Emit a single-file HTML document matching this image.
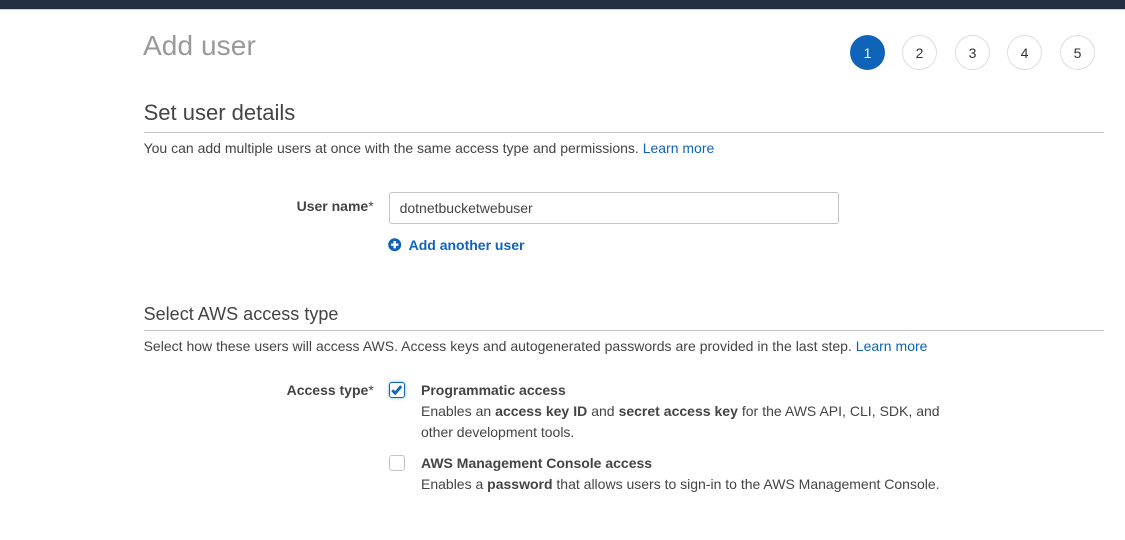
<!DOCTYPE html>
<html>
<head>
<meta charset="utf-8">
<style>
html,body{margin:0;padding:0;background:#fff;width:1125px;height:540px;overflow:hidden;font-family:"Liberation Sans",sans-serif;color:#444}
.a{position:absolute;white-space:nowrap;line-height:18px}
.t{font-size:14px}
b{color:#444}
.lnk{color:#0f63b8}
.c{position:absolute;top:35px;width:33px;height:33px;border:1px solid #ddd;border-radius:50%;text-align:center;line-height:35px;font-size:14px;color:#333;background:#fff}
.line{position:absolute;left:144px;width:960px;height:1px;background:#c4c4c4}
</style>
</head>
<body>
<div style="position:absolute;left:0;top:0;width:1125px;height:9px;background:#232f42"></div>
<div style="position:absolute;left:0;top:9px;width:1125px;height:1px;background:#d0d3d6"></div>

<div class="a" style="left:143px;top:29px;font-size:28px;letter-spacing:.1px;line-height:34px;color:#999">Add user</div>

<div class="c" style="left:850px;width:35px;height:35px;border:0;background:#0f63b8;color:#fff;line-height:37px">1</div>
<div class="c" style="left:902px">2</div>
<div class="c" style="left:955px">3</div>
<div class="c" style="left:1007px">4</div>
<div class="c" style="left:1060px">5</div>

<div class="a" style="left:143.6px;top:100px;font-size:22px;line-height:26px;color:#444">Set user details</div>
<div class="line" style="top:132px"></div>
<div class="a t" style="left:143.6px;top:139px">You can add multiple users at once with the same access type and permissions. <span class="lnk">Learn more</span></div>

<div class="a t" style="left:296.6px;top:197px"><b>User name</b>*</div>
<div style="position:absolute;left:389px;top:192px;width:448px;height:30px;border:1px solid #c4c4c4;border-radius:3px;background:#fff"></div>
<div class="a t" style="left:399.6px;top:199px;color:#444">dotnetbucketwebuser</div>

<svg style="position:absolute;left:388px;top:238px" width="14" height="14" viewBox="0 0 14 14"><circle cx="6.7" cy="6.7" r="6.5" fill="#0f63b8"/><path d="M6.7 3v7.4M3 6.7h7.4" stroke="#fff" stroke-width="2.4"/></svg>
<div class="a t" style="left:408.6px;top:236px;font-weight:bold;color:#0f63b8">Add another user</div>

<div class="a" style="left:143.6px;top:303px;font-size:18px;letter-spacing:.02px;line-height:22px;color:#444">Select AWS access type</div>
<div class="line" style="top:330px"></div>
<div class="a t" style="left:143.6px;top:337px;word-spacing:.08px">Select how these users will access AWS. Access keys and autogenerated passwords are provided in the last step. <span class="lnk">Learn more</span></div>

<div class="a t" style="left:286.6px;top:381px"><b>Access type</b>*</div>

<div style="position:absolute;left:389px;top:382px;width:14px;height:14px;border:1px solid #0f63b8;border-radius:3px;background:#fff;box-shadow:0 0 3px #7fb4ea"></div>
<svg style="position:absolute;left:389px;top:382px" width="16" height="16" viewBox="0 0 16 16"><path d="M3.2 8.2l3 3 6-7" fill="none" stroke="#0f63b8" stroke-width="2.8"/></svg>

<div class="a t" style="left:421px;top:381px"><b>Programmatic access</b></div>
<div class="a t" style="left:421px;top:402px;word-spacing:.1px">Enables an <b>access key ID</b> and <b>secret access key</b> for the AWS API, CLI, SDK, and</div>
<div class="a t" style="left:421px;top:423px">other development tools.</div>

<div style="position:absolute;left:389px;top:455px;width:14px;height:14px;border:1px solid #c4c4c4;border-radius:3px;background:#fff"></div>
<div class="a t" style="left:421px;top:454px"><b>AWS Management Console access</b></div>
<div class="a t" style="left:421px;top:475px">Enables a <b>password</b> that allows users to sign-in to the AWS Management Console.</div>
</body>
</html>
